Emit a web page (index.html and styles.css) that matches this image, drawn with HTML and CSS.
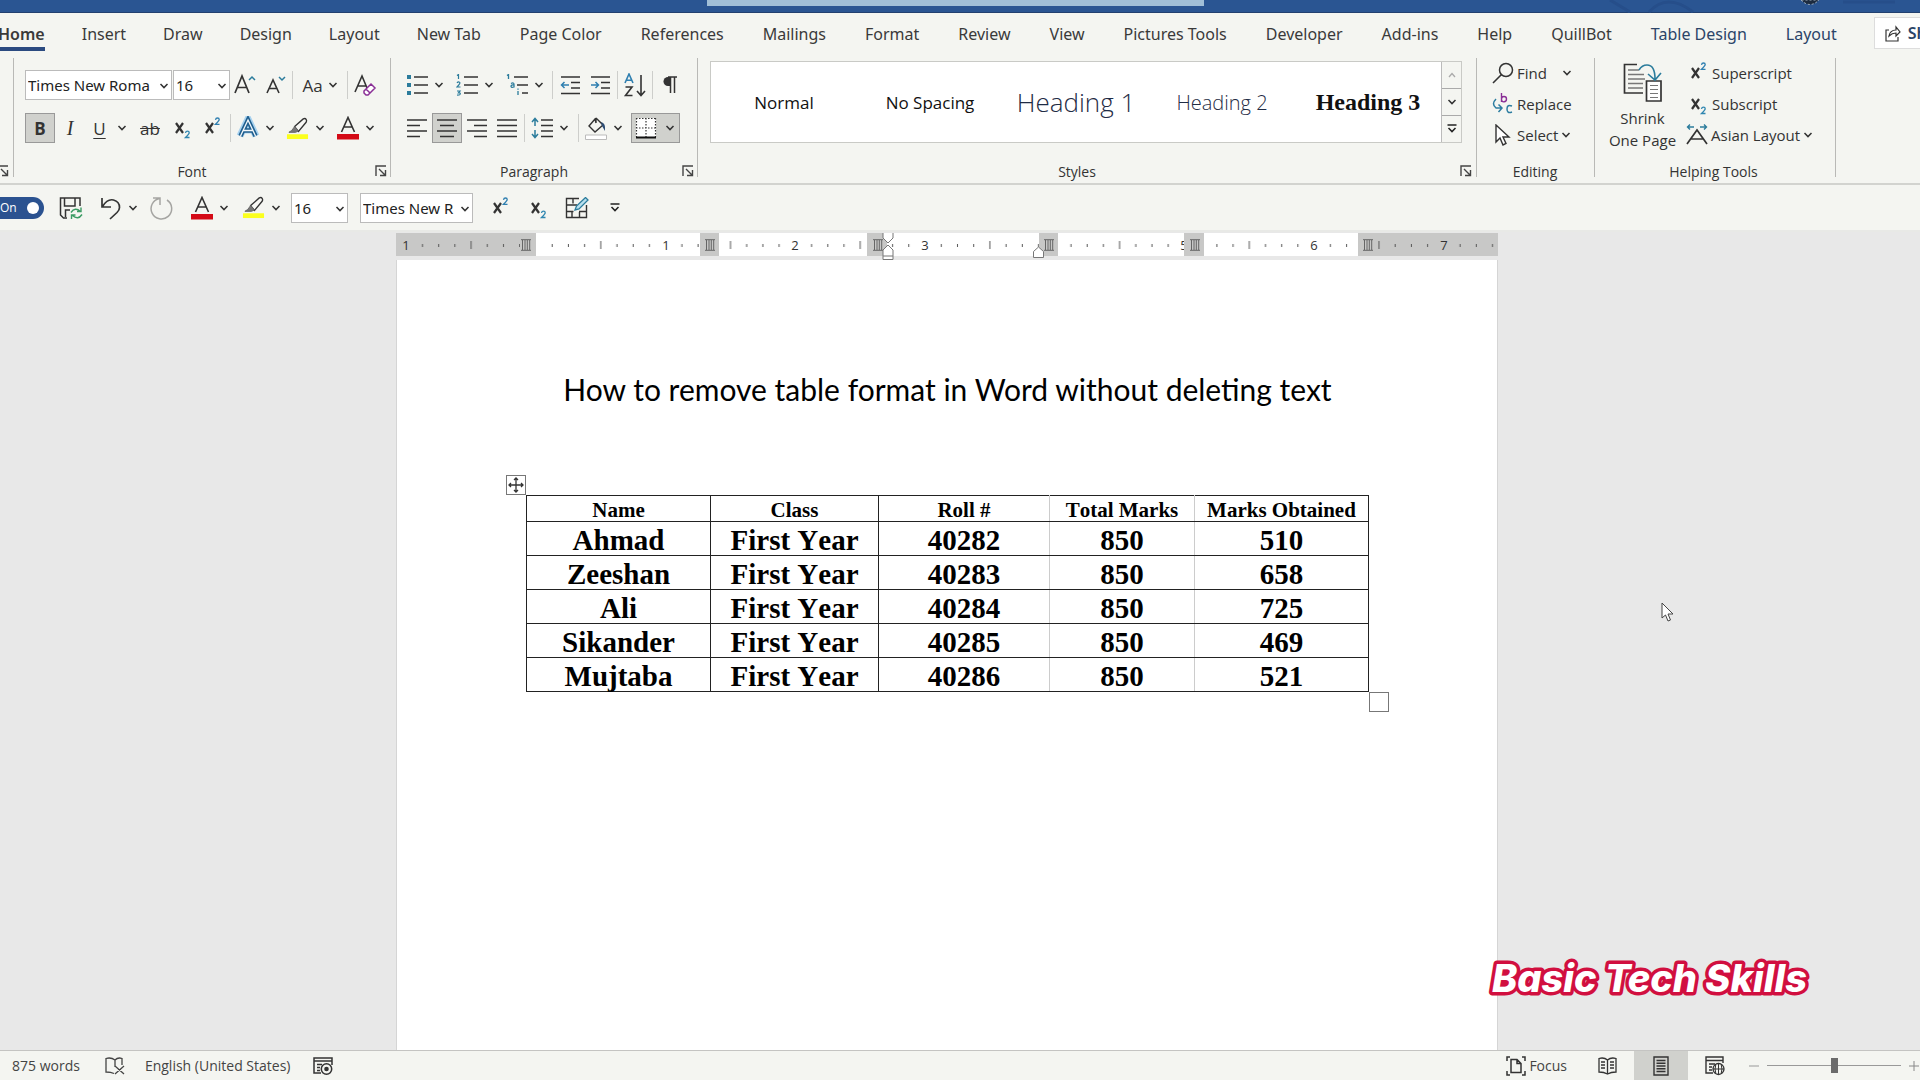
FILE: index.html
```html
<!DOCTYPE html>
<html lang="en">
<head>
    <meta charset="UTF-8">
    <meta name="viewport" content="width=device-width, initial-scale=1.0">
    <title>Document - Word</title>
    <link rel="stylesheet" href="styles.css">
</head>

<body>
    <!-- shared icons -->
    <svg class="defs" width="0" height="0">
        <symbol id="caret" viewBox="0 0 10 10"><path d="M1.500 3l3.500 3.600L8.500 3" fill="none" stroke="#333" stroke-width="1.500"/></symbol>
        <symbol id="launcher" viewBox="0 0 12 12"><path d="M1 11V1h10M4 4l6 6M10.500 5v5.500H5" fill="none" stroke="#444" stroke-width="1.400"/></symbol>
        <symbol id="font-color" viewBox="0 0 24 24"><path d="M5.500 16L12 1.500 18.500 16M7.800 11h8.400" fill="none" stroke="#333" stroke-width="1.600"/><path d="M1 18h22v5.500H1z" fill="#d40a16"/></symbol>
        <symbol id="highlight" viewBox="0 0 24 24"><path d="M9 10l9-8q2-1 3 .5t0 3L13 15z" fill="#f8f8f5" stroke="#333" stroke-width="1.400"/><path d="M9 10l-3 4-3 2h7l3-1.500z" fill="#777" stroke="#666"/><path d="M1 18h22v5H1z" fill="#fbff1e"/></symbol>
        <symbol id="sub" viewBox="0 0 20 24"><path d="M3 7l7 10M10 7L3 17" stroke="#333" stroke-width="2.200"/><path d="M12.500 17q.3-1.800 2-1.800t1.700 1.600q0 1.200-3.700 4.700h4" fill="none" stroke="#2f86b0" stroke-width="1.300"/></symbol>
        <symbol id="sup" viewBox="0 0 20 24"><path d="M3 7l7 10M10 7L3 17" stroke="#333" stroke-width="2.200"/><path d="M12.500 3.800q.3-1.800 2-1.800t1.700 1.600q0 1.200-3.700 4.700h4" fill="none" stroke="#2f7fb0" stroke-width="1.300"/></symbol>
        <symbol id="tab-mark" viewBox="0 0 10 12"><path d="M0 .7h10M0 11.300h10M1.500 1v10M4 1v10M6.300 1v10M8.700 1v10" stroke="#666" fill="none"/></symbol>
    </svg>

    <header class="titlebar">
        <div class="search-edge"></div>
        <svg class="title-art" width="320" height="13" viewBox="0 0 320 13">
            <g fill="none" stroke="#264e8a" stroke-width="3"><path d="M35 0l20 12M74 12q18-20 44 0M268 2h52"/></g>
            <path d="M226 0q9 9 18 0z" fill="#1c2b40" stroke="#aab9c8" stroke-dasharray="2 2"/>
        </svg>
    </header>

    <nav class="tabs">
        <a class="tab active" href="#">Home</a>
        <a class="tab" href="#">Insert</a>
        <a class="tab" href="#">Draw</a>
        <a class="tab" href="#">Design</a>
        <a class="tab" href="#">Layout</a>
        <a class="tab" href="#">New Tab</a>
        <a class="tab" href="#">Page Color</a>
        <a class="tab" href="#">References</a>
        <a class="tab" href="#">Mailings</a>
        <a class="tab" href="#">Format</a>
        <a class="tab" href="#">Review</a>
        <a class="tab" href="#">View</a>
        <a class="tab" href="#">Pictures Tools</a>
        <a class="tab" href="#">Developer</a>
        <a class="tab" href="#">Add-ins</a>
        <a class="tab" href="#">Help</a>
        <a class="tab" href="#">QuillBot</a>
        <a class="tab context" href="#">Table Design</a>
        <a class="tab context" href="#">Layout</a>
        <button class="share">
            <svg width="16" height="17" viewBox="0 0 16 17"><path d="M4 5H1v11h12v-4M4 11q1-6 7-6V2l4 5-4 4V8q-4 0-7 3z" fill="none" stroke="#333" stroke-width="1.200"/></svg>
            Share
        </button>
    </nav>

    <main class="ribbon">
        <section class="group clipboard">
            <div class="group-foot"><button class="launch" aria-label="Clipboard settings"><svg width="12" height="12"><use href="#launcher"/></svg></button></div>
        </section>

        <section class="group font-group">
            <div class="row">
                <span class="combo font-name"><select aria-label="Font"><option>Times New Roma</option></select><svg width="10" height="10"><use href="#caret"/></svg></span>
                <span class="combo font-size"><select aria-label="Font size"><option>16</option></select><svg width="10" height="10"><use href="#caret"/></svg></span>
                <button class="tool" aria-label="Grow font"><svg width="24" height="24" viewBox="0 0 24 24"><path d="M2 20L9 3l7 17M4.500 14.500h9" fill="none" stroke="#333" stroke-width="1.700"/><path d="M16 7l3-3 3 3" fill="none" stroke="#2b7c9c" stroke-width="1.500"/></svg></button>
                <button class="tool" aria-label="Shrink font"><svg width="24" height="24" viewBox="0 0 24 24"><path d="M4 20l6-13 6 13M6 15.500h8" fill="none" stroke="#333" stroke-width="1.600"/><path d="M16 4l3 3 3-3" fill="none" stroke="#2b7c9c" stroke-width="1.500"/></svg></button>
                <i class="sep"></i>
                <button class="tool case" aria-label="Change case">Aa<svg width="10" height="10"><use href="#caret"/></svg></button>
                <i class="sep"></i>
                <button class="tool" aria-label="Clear formatting"><svg width="24" height="24" viewBox="0 0 24 24"><path d="M2 19L9 3l5 12M4.500 13h8" fill="none" stroke="#333" stroke-width="1.600"/><path d="M11 18l7-7 4 4-7 7h-2l-2-2zM13 16l4 4" fill="#fff" stroke="#8a2f96" stroke-width="1.500"/></svg></button>
            </div>
            <div class="row">
                <button class="tool pressed bold">B</button>
                <button class="tool italic">I</button>
                <span class="split"><button class="tool underline">U</button><button class="drop" aria-label="Underline style"><svg width="10" height="10"><use href="#caret"/></svg></button></span>
                <button class="tool strike">ab</button>
                <button class="tool" aria-label="Subscript"><svg width="20" height="24"><use href="#sub"/></svg></button>
                <button class="tool" aria-label="Superscript"><svg width="20" height="24"><use href="#sup"/></svg></button>
                <i class="sep"></i>
                <span class="split"><button class="tool" aria-label="Text effects"><svg width="24" height="24" viewBox="0 0 24 24"><path d="M4 20l8-17 8 17M8 14h8" fill="none" stroke="#a8d2ef" stroke-width="7"/><path d="M4.500 20L12 4l7.500 16M7.500 14.500h9" fill="none" stroke="#1f5f8f" stroke-width="4.500"/><path d="M4.500 20L12 4l7.500 16M7.500 14.500h9" fill="none" stroke="#f4f8fb" stroke-width="1.300"/></svg></button><button class="drop" aria-label="Effects menu"><svg width="10" height="10"><use href="#caret"/></svg></button></span>
                <span class="split"><button class="tool" aria-label="Highlight"><svg width="23" height="23"><use href="#highlight"/></svg></button><button class="drop" aria-label="Highlight colors"><svg width="10" height="10"><use href="#caret"/></svg></button></span>
                <span class="split"><button class="tool" aria-label="Font color"><svg width="24" height="24"><use href="#font-color"/></svg></button><button class="drop" aria-label="Font colors"><svg width="10" height="10"><use href="#caret"/></svg></button></span>
            </div>
            <div class="group-foot"><span>Font</span><button class="launch" aria-label="Font settings"><svg width="12" height="12"><use href="#launcher"/></svg></button></div>
        </section>

        <section class="group para-group">
            <div class="row">
                <span class="split list"><button class="tool" aria-label="Bullets"><svg width="22" height="22" viewBox="0 0 22 22"><path d="M1 1h4v4H1zM1 9h4v4H1zM1 17h4v4H1z" fill="#2b7c9c"/><path d="M8 3h14M8 11h14M8 19h14" stroke="#333" stroke-width="1.500"/></svg></button><button class="drop" aria-label="Bullet library"><svg width="10" height="10"><use href="#caret"/></svg></button></span>
                <span class="split list"><button class="tool" aria-label="Numbering"><svg width="22" height="22" viewBox="0 0 22 22"><path d="M1 1.500l1.500-1V5M1 9q1-1.500 2.500-.8T1 13h3.500M1 17h3L2.500 18.800q2 0 1.800 1.200T1 21" fill="none" stroke="#2b7c9c" stroke-width="1.200"/><path d="M8 3h14M8 11h14M8 19h14" stroke="#333" stroke-width="1.500"/></svg></button><button class="drop" aria-label="Number library"><svg width="10" height="10"><use href="#caret"/></svg></button></span>
                <span class="split list"><button class="tool" aria-label="Multilevel list"><svg width="22" height="22" viewBox="0 0 22 22"><path d="M1 1.500l1.500-1V5M5 9.500q3-1.500 3 1V13q-3 1-3-.7T8 11M12 17v4M12 14.500v1.200" fill="none" stroke="#2b7c9c" stroke-width="1.300"/><path d="M8 3h14M11 11h11M16 19h6" stroke="#333" stroke-width="1.500"/></svg></button><button class="drop" aria-label="List library"><svg width="10" height="10"><use href="#caret"/></svg></button></span>
                <i class="sep"></i>
                <button class="tool" aria-label="Decrease indent"><svg width="20" height="20" viewBox="0 0 20 20"><path d="M1 2h19M11 7.500h9M11 13h9M1 18.500h19" stroke="#333" stroke-width="1.500"/><path d="M9 10H1.500M4.500 7l-3 3 3 3" fill="none" stroke="#2f7fb0" stroke-width="1.500"/></svg></button>
                <button class="tool" aria-label="Increase indent"><svg width="20" height="20" viewBox="0 0 20 20"><path d="M1 2h19M11 7.500h9M11 13h9M1 18.500h19" stroke="#333" stroke-width="1.500"/><path d="M1 10h7.500M5.500 7l3 3-3 3" fill="none" stroke="#2f7fb0" stroke-width="1.500"/></svg></button>
                <i class="sep"></i>
                <button class="tool" aria-label="Sort"><svg width="24" height="24" viewBox="0 0 24 24"><path d="M2 10l4-9 4 9M3.500 7.300h5" fill="none" stroke="#2f7fb0" stroke-width="1.600"/><path d="M2.500 14H9l-6.500 8.500h7M18 2v20M14 18l4 4.500 4-4.500" fill="none" stroke="#333" stroke-width="1.600"/></svg></button>
                <i class="sep"></i>
                <button class="tool" aria-label="Show marks"><svg width="16" height="18" viewBox="0 0 16 18"><path d="M8 1H6a4 4 0 000 9h2z" fill="#333"/><path d="M6 1h9M8.500 1v16M12.500 1v16" stroke="#333" stroke-width="1.500" fill="none"/></svg></button>
            </div>
            <div class="row">
                <button class="tool" aria-label="Align left"><svg width="20" height="20" viewBox="0 0 20 20"><path d="M0 2h20M0 7.500h13M0 13h20M0 18.500h13" stroke="#333" stroke-width="1.500"/></svg></button>
                <button class="tool pressed" aria-label="Center"><svg width="20" height="20" viewBox="0 0 20 20"><path d="M0 2h20M3 7.500h14M0 13h20M3 18.500h14" stroke="#333" stroke-width="1.500"/></svg></button>
                <button class="tool" aria-label="Align right"><svg width="20" height="20" viewBox="0 0 20 20"><path d="M0 2h20M7 7.500h13M0 13h20M7 18.500h13" stroke="#333" stroke-width="1.500"/></svg></button>
                <button class="tool" aria-label="Justify"><svg width="20" height="20" viewBox="0 0 20 20"><path d="M0 2h20M0 7.500h20M0 13h20M0 18.500h20" stroke="#333" stroke-width="1.500"/></svg></button>
                <i class="sep"></i>
                <span class="split"><button class="tool" aria-label="Line spacing"><svg width="22" height="22" viewBox="0 0 22 22"><path d="M4 2v7M1 5l3-3.500L7 5M4 13v7M1 17l3 3.500L7 17" fill="none" stroke="#2b7c9c" stroke-width="1.500"/><path d="M10 3h12M10 8.500h12M10 14h12M10 19.500h12" stroke="#333" stroke-width="1.500"/></svg></button><button class="drop" aria-label="Spacing options"><svg width="10" height="10"><use href="#caret"/></svg></button></span>
                <i class="sep"></i>
                <span class="split"><button class="tool" aria-label="Shading"><svg width="24" height="24" viewBox="0 0 24 24"><path d="M12 2l7 7-8 7-6-6 6-7 1 4M12 2v5" fill="none" stroke="#333" stroke-width="1.400"/><path d="M17 6q5 1 4 9l-3-5z" fill="#2d4d75"/><path d="M1.500 19h21v4.500h-21z" fill="#fff" stroke="#bbb"/></svg></button><button class="drop" aria-label="Shading colors"><svg width="10" height="10"><use href="#caret"/></svg></button></span>
                <span class="split pressed"><button class="tool" aria-label="Borders"><svg width="22" height="22" viewBox="0 0 22 22"><path d="M1 1h20v19H1z" fill="#fff"/><path d="M1 1.500h20M1 11h20M1.500 1v19M11 1v19M20.500 1v19" stroke="#333" stroke-width="1.200" stroke-dasharray="1.500 1.500"/><path d="M1 20.500h20" stroke="#111" stroke-width="2"/></svg></button><button class="drop" aria-label="Border styles"><svg width="10" height="10"><use href="#caret"/></svg></button></span>
            </div>
            <div class="group-foot"><span>Paragraph</span><button class="launch" aria-label="Paragraph settings"><svg width="12" height="12"><use href="#launcher"/></svg></button></div>
        </section>

        <section class="group styles-group">
            <div class="gallery">
                <button class="style">Normal</button>
                <button class="style">No Spacing</button>
                <button class="style h1">Heading 1</button>
                <button class="style h2">Heading 2</button>
                <button class="style h3">Heading 3</button>
                <div class="scroller">
                    <button aria-label="Previous styles"><svg width="10" height="10" viewBox="0 0 10 10"><path d="M2 7l3-3.500L8 7" fill="none" stroke="#aaa" stroke-width="1.300"/></svg></button>
                    <button aria-label="Next styles"><svg width="10" height="10"><use href="#caret"/></svg></button>
                    <button aria-label="More styles"><svg width="10" height="10" viewBox="0 0 10 10"><path d="M.5 1h9M1.500 4L5 7.600 8.500 4" fill="none" stroke="#222" stroke-width="1.500"/></svg></button>
                </div>
            </div>
            <div class="group-foot"><span>Styles</span><button class="launch" aria-label="Style settings"><svg width="12" height="12"><use href="#launcher"/></svg></button></div>
        </section>

        <section class="group edit-group">
            <div class="stack">
                <button class="command"><svg width="22" height="22" viewBox="0 0 22 22"><circle cx="14" cy="8" r="6.500" fill="none" stroke="#333" stroke-width="1.500"/><path d="M9.500 12.500L1 21" stroke="#333" stroke-width="1.600"/></svg>Find<svg class="far" width="10" height="10"><use href="#caret"/></svg></button>
                <button class="command"><svg width="22" height="22" viewBox="0 0 22 22"><path d="M9.500 0v9M9.500 6q0-2.500 2.500-2.500T14.500 6 12 8.800 9.500 6" fill="none" stroke="#8a2f96" stroke-width="1.400"/><path d="M20 13q-5-2-5 3t5 3M4 6q-5 5 0 9h6M6.500 11.500L10 15l-3.500 4" fill="none" stroke="#2b7ca0" stroke-width="1.500"/></svg>Replace</button>
                <button class="command"><svg width="22" height="22" viewBox="0 0 22 22"><path d="M4 1v17l4-4 3 7 3-1.500-3-6.500h6z" fill="#fff" stroke="#333" stroke-width="1.400"/></svg>Select<svg width="10" height="10"><use href="#caret"/></svg></button>
            </div>
            <div class="group-foot"><span>Editing</span></div>
        </section>

        <section class="group help-group">
            <div class="columns">
                <button class="big">
                    <svg width="40" height="40" viewBox="0 0 40 40"><path d="M20 30H1.500V1.500H14" fill="none" stroke="#333" stroke-width="1.700"/><path d="M5 7h11M5 11.500h16M5 16h17M5 20.500h15M5 25h15" stroke="#777" stroke-width="1.300"/><path d="M23.500 18h14.500v20H23.500z" fill="#fff" stroke="#333" stroke-width="1.700"/><path d="M27 22.500h8M27 26.500h8M27 30.500h8M27 34.500h8" stroke="#777" stroke-width="1.200"/><path d="M16 7q3-5 8-5 8 0 8 14M25 11l7 6 6-7" fill="none" stroke="#2b7c9c" stroke-width="1.600"/></svg>
                    Shrink<br>One Page
                </button>
                <div class="stack">
                    <button class="command"><svg width="20" height="24"><use href="#sup"/></svg>Superscript</button>
                    <button class="command"><svg width="20" height="24"><use href="#sub"/></svg>Subscript</button>
                    <button class="command asian"><svg width="22" height="22" viewBox="0 0 22 22"><path d="M1 20L11 6l10 14M5 15h12" fill="none" stroke="#333" stroke-width="1.700"/><path d="M8 3H1.500M4 .5L1.500 3 4 5.500M14 3h6.500M18 .5L20.500 3 18 5.500" fill="none" stroke="#2b7c9c" stroke-width="1.400"/></svg>Asian Layout<svg width="10" height="10"><use href="#caret"/></svg></button>
                </div>
            </div>
            <div class="group-foot"><span>Helping Tools</span></div>
        </section>
    </main>

    <div class="quick">
        <button class="toggle">On<i></i></button>
        <button class="tool save" aria-label="Save"><svg width="24" height="24" viewBox="0 0 24 24"><path d="M8 22H4.500L1.500 19V2H21v8M5.500 2v8H16V2M6.500 21v-7H11" fill="none" stroke="#333" stroke-width="1.500"/><path d="M12 16.500q4-6 9.500-1M22 11.500v4h-4M23 18.500q-4 6-9.500 1M12.500 23v-4h4" fill="none" stroke="#3a9b63" stroke-width="1.400"/></svg></button>
        <span class="split undo"><button class="tool" aria-label="Undo"><svg width="24" height="24" viewBox="0 0 24 24"><path d="M3 2v9h9M3.500 10.500q5-8 11-6.500t6 7.500q0 2.500-2.500 5L11 23" fill="none" stroke="#333" stroke-width="1.700"/></svg></button><button class="drop" aria-label="Undo history"><svg width="10" height="10"><use href="#caret"/></svg></button></span>
        <button class="tool redo" aria-label="Repeat"><svg width="24" height="24" viewBox="0 0 24 24"><path d="M3 2h7v7M9.500 2.500A10.300 10.300 0 1017 4" fill="none" stroke="#a5a5a2" stroke-width="1.500"/></svg></button>
        <span class="split"><button class="tool" aria-label="Font color"><svg width="24" height="24"><use href="#font-color"/></svg></button><button class="drop" aria-label="Font colors"><svg width="10" height="10"><use href="#caret"/></svg></button></span>
        <span class="split"><button class="tool" aria-label="Highlight"><svg width="23" height="23"><use href="#highlight"/></svg></button><button class="drop" aria-label="Highlight colors"><svg width="10" height="10"><use href="#caret"/></svg></button></span>
        <span class="combo font-size"><select aria-label="Quick font size"><option>16</option></select><svg width="10" height="10"><use href="#caret"/></svg></span>
        <span class="combo quick-font"><select aria-label="Quick font"><option>Times New R</option></select><svg width="10" height="10"><use href="#caret"/></svg></span>
        <button class="tool" aria-label="Superscript"><svg width="20" height="24"><use href="#sup"/></svg></button>
        <button class="tool" aria-label="Subscript"><svg width="20" height="24"><use href="#sub"/></svg></button>
        <button class="tool" aria-label="Draw table"><svg width="24" height="22" viewBox="0 0 24 22"><path d="M14 1.500H1.500v19h20V8M1.500 8H12M1.500 14.500h7M14 14.500h7M8 1.500v5M7 14v6.500M14.500 15v5.500" fill="none" stroke="#333" stroke-width="1.400"/><path d="M10 13l1.500-4 9-8.500L23 3l-9 9z" fill="#b9e0ee" stroke="#2b7c9c" stroke-width="1.300"/></svg></button>
        <button class="tool" aria-label="Customize toolbar"><svg width="10" height="10" viewBox="0 0 10 10"><path d="M.5 1h9M1.500 4L5 7.600 8.500 4" fill="none" stroke="#222" stroke-width="1.500"/></svg></button>
    </div>

    <div class="workspace">
        <div class="sheet-column">
            <svg class="ruler" width="1102" height="27" viewBox="0 0 1102 27">
                <defs>
                    <!-- one inch, ticks every eighth -->
                    <pattern id="inch" x="140" width="129.700" height="24" patternUnits="userSpaceOnUse">
                        <path d="M16.200 11v3M32.400 11v3M48.600 11v3M64.800 8v8M81 11v3M97.200 11v3M113.400 11v3" stroke="#555"/>
                    </pattern>
                </defs>
                <path d="M0 0h1102v23H0z" fill="#fff"/>
                <path d="M0 0h140v23H0zM304 0h19v23h-19zM471 0h20v23h-20zM643 0h19v23h-19zM788 0h20v23h-20zM962 0h140v23H962z" fill="#c8c8c7"/>
                <path d="M0 0h124v23H0zM140 0h164v23H140zM323 0h148v23H323zM491 0h152v23H491zM662 0h126v23H662zM808 0h154v23H808zM978 0h124v23H978z" fill="url(#inch)"/>
                <g class="ruler-text">
                    <text x="10" y="17">1</text><text x="270" y="17">1</text><text x="399" y="17">2</text><text x="529" y="17">3</text><text x="788" y="17">5</text><text x="918" y="17">6</text><text x="1048" y="17">7</text>
                </g>
                <path d="M788 0h10v23h-10z" fill="#c8c8c7"/>
                <use href="#tab-mark" x="125" y="6" width="10" height="12"/>
                <use href="#tab-mark" x="309" y="6" width="10" height="12"/>
                <use href="#tab-mark" x="477" y="6" width="10" height="12"/>
                <use href="#tab-mark" x="648" y="6" width="10" height="12"/>
                <use href="#tab-mark" x="794" y="6" width="10" height="12"/>
                <use href="#tab-mark" x="967" y="6" width="10" height="12"/>
                <g fill="#fff" stroke="#777"><path d="M487 0v5l5 5 5-5V0"/><path d="M487 26.500V17l5-5 5 5v9.500zM487 23h10"/><path d="M637.500 24.500v-6l5-4.500 5 4.500v6z"/></g>
            </svg>
            <article class="page">
                <h1>How to remove table format in Word without deleting text</h1>
                <div class="table-wrap">
                    <button class="move-handle" aria-label="Move table"><svg width="16" height="16" viewBox="0 0 16 16"><path d="M8 1v14M1 8h14M6 3l2-2 2 2M6 13l2 2 2-2M3 6L1 8l2 2M13 6l2 2-2 2" fill="none" stroke="#333" stroke-width="1.300"/></svg></button>
                    <table>
                        <colgroup><col class="c-name"><col class="c-class"><col class="c-roll"><col class="c-total"><col class="c-marks"></colgroup>
                        <thead>
                            <tr><th>Name</th><th>Class</th><th>Roll #</th><th>Total Marks</th><th>Marks Obtained</th></tr>
                        </thead>
                        <tbody>
                            <tr><td>Ahmad</td><td>First Year</td><td>40282</td><td>850</td><td>510</td></tr>
                            <tr><td>Zeeshan</td><td>First Year</td><td>40283</td><td>850</td><td>658</td></tr>
                            <tr><td>Ali</td><td>First Year</td><td>40284</td><td>850</td><td>725</td></tr>
                            <tr><td>Sikander</td><td>First Year</td><td>40285</td><td>850</td><td>469</td></tr>
                            <tr><td>Mujtaba</td><td>First Year</td><td>40286</td><td>850</td><td>521</td></tr>
                        </tbody>
                    </table>
                    <span class="resize-handle"></span>
                </div>
            </article>
        </div>
        <svg class="pointer" width="13" height="20" viewBox="0 0 13 20"><path d="M1 1v15l3.500-3 2.500 6 2.500-1-2.500-6h5z" fill="#fff" stroke="#444"/></svg>
        <svg class="watermark" width="340" height="54" viewBox="0 0 340 54"><text x="334" y="40">Basic Tech Skills</text></svg>
    </div>

    <footer class="status">
        <span class="words">875 words</span>
        <svg class="proof" width="20" height="18" viewBox="0 0 20 18"><path d="M10 3Q6 0 1 1.500V15q5 0 8 1.500M10 3q3-3 7-1.500V8M10 3v7M10 9l9 8M19 9l-9 8" fill="none" stroke="#444" stroke-width="1.300"/></svg>
        <span>English (United States)</span>
        <svg class="macro" width="20" height="18" viewBox="0 0 20 18"><path d="M8 16H1V1h18v7M1 4h18M4 7.500h5M4 10.500h3M4 13.500h3" fill="none" stroke="#333" stroke-width="1.500"/><circle cx="13.500" cy="12" r="5.200" fill="#f4f5f1" stroke="#333" stroke-width="1.500"/><circle cx="13.500" cy="12" r="2.300" fill="#333"/></svg>
        <div class="views">
            <button class="focus"><svg width="20" height="20" viewBox="0 0 20 20"><path d="M4 1H1v4M16 1h3v4M4 19H1v-4M16 19h3v-4M5 3.500h6l4 4v9H5zM11 3.500v4h4" fill="none" stroke="#333" stroke-width="1.500"/></svg>Focus</button>
            <button class="view" aria-label="Read mode"><svg width="19" height="18" viewBox="0 0 19 18"><path d="M9.500 3Q6 0 1 1.500V15q5 0 8.500 2 3.500-2 8.500-2V1.500Q13 0 9.500 3zv14M3 5h4M3 8h4M3 11h4M12 5h4M12 8h4M12 11h4" fill="none" stroke="#333" stroke-width="1.300"/></svg></button>
            <button class="view current" aria-label="Print layout"><svg width="16" height="20" viewBox="0 0 16 20"><path d="M1 1h14v18H1zM3.500 4.500h9M3.500 7.300h9M3.500 10h9M3.500 12.800h9M3.500 15.500h9" fill="none" stroke="#333" stroke-width="1.400"/></svg></button>
            <button class="view" aria-label="Web layout"><svg width="20" height="20" viewBox="0 0 20 20"><path d="M8 17H1V1h17v6M1 4.500h17M4 8h6M4 11h3M4 14h3" fill="none" stroke="#333" stroke-width="1.400"/><circle cx="13.500" cy="13" r="5.500" fill="#f4f5f1" stroke="#333" stroke-width="1.300"/><path d="M8 13h11M13.500 7.500v11M10.800 8.500q-1.500 4.500 0 9M16.200 8.500q1.500 4.500 0 9" fill="none" stroke="#333"/></svg></button>
            <button class="zoom-step" aria-label="Zoom out"><svg width="12" height="12" viewBox="0 0 12 12"><path d="M1 6h10" stroke="#999"/></svg></button>
            <input class="zoom" type="range" min="0" max="100" value="50" aria-label="Zoom">
            <button class="zoom-step" aria-label="Zoom in"><svg width="12" height="12" viewBox="0 0 12 12"><path d="M1 6h10M6 1v10" stroke="#888"/></svg></button>
        </div>
    </footer>
</body>

</html>
```

FILE: styles.css
```css
* {
    box-sizing: border-box;
}

body {
    margin: 0;
    height: 100vh;
    display: flex;
    flex-direction: column;
    overflow: hidden;
    background: #f4f5f1;
    color: #333;
    font-family: "Open Sans", "Noto Sans", sans-serif;
    font-size: 15px;
}

button {
    font: inherit;
    color: inherit;
    background: none;
    border: 0;
    padding: 0;
    white-space: nowrap;
}

svg {
    flex: none;
    display: block;
}

.defs {
    position: absolute;
}

/* title bar */
.titlebar {
    height: 13px;
    flex: none;
    background: #2a5592;
    border-bottom: 1px solid #22406f;
    display: flex;
    justify-content: space-between;
    padding-right: 25px;
}

.search-edge {
    width: 497px;
    height: 6px;
    flex: none;
    margin-left: 707px;
    background: #a1bfd7;
}

/* tabs */
.tabs {
    height: 45px;
    flex: none;
    display: flex;
    gap: 37px;
    align-items: flex-start;
    padding-top: 4px;
    font-family: "Noto Sans", sans-serif;
    font-size: 16px;
    white-space: nowrap;
}

.tab {
    flex: none;
    color: #3a3a3a;
    text-decoration: none;
    height: 34px;
    line-height: 34px;
}

.tab:nth-child(n+7) {
    margin-left: 2px;
}

.tab.active {
    margin-left: -2px;
    font-weight: 600;
    border-bottom: 4px solid #2b4a80;
}

.tab.context {
    color: #2b4468;
}

.share {
    display: flex;
    align-items: center;
    gap: 7px;
    width: 80px;
    height: 32px;
    flex: none;
    padding-left: 10px;
    background: #fff;
    border: 1px solid #ddd;
    font-weight: 600;
    color: #2b4468;
}

/* ribbon */
.ribbon {
    height: 127px;
    flex: none;
    display: flex;
    border-bottom: 2px solid #d2d3cf;
}

.group {
    height: 119px;
    flex: none;
    display: flex;
    flex-direction: column;
    gap: 13px;
    padding: 12px 3px 0 11px;
    border-right: 1px solid #b9b9b6;
}

.clipboard {
    width: 14px;
    padding: 0;
}

.font-group {
    width: 377px;
}

.para-group {
    width: 307px;
}

.styles-group {
    width: 779px;
    padding: 3px 14px 0 12px;
}

.edit-group {
    width: 118px;
    gap: 0;
    padding: 0 0 0 15px;
}

.help-group {
    width: 241px;
    gap: 0;
    padding: 0 0 0 13px;
}

.group-foot {
    display: flex;
    align-items: center;
    height: 20px;
    margin: auto 0 -4px -16px;
    font-size: 14px;
}

.group-foot span {
    flex: 1;
    text-align: center;
}

.clipboard .group-foot {
    margin-left: -3px;
}

.styles-group .group-foot {
    margin-right: -10px;
}

.row {
    display: flex;
    align-items: center;
    height: 30px;
}

.tool {
    width: 30px;
    height: 30px;
    display: flex;
    align-items: center;
    justify-content: center;
    font-size: 17px;
}

.split {
    display: flex;
    align-items: center;
}

.split .tool {
    width: 29px;
}

.split .drop {
    width: 16px;
    display: flex;
    justify-content: center;
}

.split + .split {
    margin-left: 5px;
}

.split.list {
    margin: 0 5px 0 0;
}

.sep {
    width: 1px;
    height: 28px;
    margin: 0 2px;
    background: #cdcecb;
}

.split + .sep {
    margin-left: 6px;
}

.split.list + .sep {
    margin-left: 0;
}

.pressed {
    background: #d0d1cd;
    box-shadow: inset 0 0 0 1px #999;
}

.split.pressed .drop {
    width: 20px;
}

.bold {
    font-weight: 700;
}

.italic {
    font-family: "Liberation Serif", serif;
    font-style: italic;
    font-size: 20px;
}

.underline {
    text-decoration: underline;
    text-underline-offset: 3px;
}

.strike {
    text-decoration: line-through;
    margin: 0 3px 0 5px;
}

.case {
    width: 50px;
    gap: 5px;
}

.combo {
    position: relative;
    height: 30px;
}

.combo select {
    appearance: none;
    width: 100%;
    height: 100%;
    padding: 0 2px;
    border: 1px solid #bbb;
    border-radius: 0;
    background: #fff;
    color: #222;
    font-family: "Noto Sans", sans-serif;
    font-size: 15px;
}

.combo svg {
    position: absolute;
    right: 3px;
    top: 11px;
    pointer-events: none;
}

.font-name {
    width: 147px;
    margin-right: 1px;
}

.font-size {
    width: 57px;
}

/* style gallery */
.gallery {
    display: flex;
    height: 82px;
    background: #fff;
    border: 1px solid #c9cac6;
}

.style {
    flex: 1;
    color: #111;
    font-size: 17px;
}

.style.h1 {
    font-weight: 300;
    font-size: 26px;
    color: #1f2c45;
}

.style.h2 {
    font-weight: 300;
    font-size: 20px;
    color: #1f2c45;
}

.style.h3 {
    font-family: "Liberation Serif", serif;
    font-weight: 700;
    font-size: 24px;
}

.scroller {
    width: 20px;
    display: flex;
    flex-direction: column;
    background: #f4f5f1;
    border-left: 1px solid #bbb;
}

.scroller button {
    flex: 1;
    display: flex;
    align-items: center;
    justify-content: center;
}

.scroller button + button {
    border-top: 1px solid #aaa;
}

.stack {
    display: flex;
    flex-direction: column;
    margin-top: -1px;
}

.command {
    display: flex;
    align-items: center;
    gap: 3px;
    height: 31px;
}

.command .far {
    margin-left: 12px;
}

.command.asian {
    margin-left: -3px;
}

.columns {
    display: flex;
    gap: 12px;
}

.big {
    width: 69px;
    line-height: 22px;
    display: block;
    padding-top: 5px;
}

.big svg {
    margin: 0 auto 4px;
}

/* quick access toolbar */
.quick {
    height: 47px;
    flex: none;
    display: flex;
    align-items: center;
    border-bottom: 2px solid #e8e9e6;
}

.toggle {
    width: 44px;
    height: 22px;
    display: flex;
    align-items: center;
    justify-content: space-between;
    padding: 0 5px 0 0;
    background: #2b5290;
    border-radius: 0 11px 11px 0;
    color: #fff;
    font-size: 12px;
}

.toggle i {
    width: 12px;
    height: 12px;
    border-radius: 50%;
    background: #fff;
}

.save {
    margin-left: 12px;
    margin-right: 10px;
}

.redo {
    margin: 0 10px 0 6px;
}

.quick .split + .split {
    margin-left: 7px;
}

.quick .combo {
    margin-left: 7px;
}

.quick .quick-font {
    width: 113px;
    margin: 0 13px 0 12px;
}

.quick .tool + .tool {
    margin-left: 8px;
}

/* document area */
.workspace {
    flex: 1;
    min-height: 0;
    position: relative;
    display: flex;
    justify-content: center;
    padding: 1px 26px 0 0;
    background: #e8e8e8;
}

.sheet-column {
    width: 1102px;
    display: flex;
    flex-direction: column;
}

.ruler {
    width: 100%;
}

.ruler-text {
    font-size: 13px;
    fill: #333;
    text-anchor: middle;
}

.page {
    flex: 1;
    background: #fff;
    border: 1px solid #d5d5d5;
    border-width: 0 1px;
    padding: 107px 128px 0 129px;
    color: #000;
}

.page h1 {
    margin: 0 0 83px;
    font-family: Lato, "Open Sans", sans-serif;
    font-weight: 400;
    font-size: 30px;
    line-height: 45px;
    text-align: center;
    white-space: nowrap;
}

.table-wrap {
    position: relative;
}

table {
    width: 100%;
    table-layout: fixed;
    border-collapse: collapse;
    border: 1px solid #222;
    font-family: "Liberation Serif", serif;
    font-weight: 700;
    font-size: 29px;
    font-kerning: none;
    text-align: center;
}

.c-name { width: 184px; }
.c-class { width: 168px; }
.c-roll { width: 171px; }
.c-total { width: 145px; }
.c-marks { width: 174px; }

th,
td {
    padding: 4px 0 0;
    height: 34px;
    line-height: 29px;
    border: 1px solid #222;
}

th {
    height: 26px;
    line-height: 21px;
    font-size: 21px;
    white-space: nowrap;
}

/* light guides between the last columns */
th:nth-child(4),
td:nth-child(4) {
    border-left-color: #ccc;
    border-right-color: #ccc;
}

th:nth-child(3),
td:nth-child(3) {
    border-right-color: #ccc;
}

th:nth-child(5),
td:nth-child(5) {
    border-left-color: #ccc;
}

.move-handle {
    position: absolute;
    left: -20px;
    top: -20px;
    width: 20px;
    height: 20px;
    padding: 1px;
    background: #fff;
    border: 1px solid #777;
}

.resize-handle {
    position: absolute;
    right: -20px;
    bottom: -20px;
    width: 20px;
    height: 20px;
    background: #fff;
    border: 1px solid #777;
}

.pointer {
    position: absolute;
    left: 1661px;
    top: 370px;
}

.watermark {
    position: absolute;
    right: 107px;
    bottom: 44px;
}

.watermark text {
    font-family: Inter, sans-serif;
    font-weight: 800;
    font-style: italic;
    font-size: 38px;
    text-anchor: end;
    fill: #fff;
    stroke: #d10f3f;
    stroke-width: 7px;
    stroke-linejoin: round;
    paint-order: stroke;
}

/* status bar */
.status {
    height: 30px;
    flex: none;
    display: flex;
    align-items: center;
    border-top: 1px solid #c4c4c2;
    padding-left: 12px;
    font-size: 14px;
    color: #444;
}

.proof {
    margin: 0 20px 0 25px;
}

.macro {
    margin-left: 23px;
}

.views {
    display: flex;
    align-items: center;
    height: 100%;
    margin-left: auto;
}

.focus {
    display: flex;
    align-items: center;
    gap: 3px;
    margin-right: 13px;
}

.view {
    width: 54px;
    height: 100%;
    display: flex;
    align-items: center;
    justify-content: center;
}

.current {
    background: #d0d1cd;
}

.zoom-step {
    width: 12px;
}

.view + .zoom-step {
    margin-left: 6px;
}

.zoom {
    appearance: none;
    width: 134px;
    height: 16px;
    margin: 0 7px;
    background: linear-gradient(#999, #999) center / 100% 1px no-repeat;
}

.zoom::-webkit-slider-thumb {
    appearance: none;
    width: 7px;
    height: 15px;
    background: #6b6b6b;
}
```
